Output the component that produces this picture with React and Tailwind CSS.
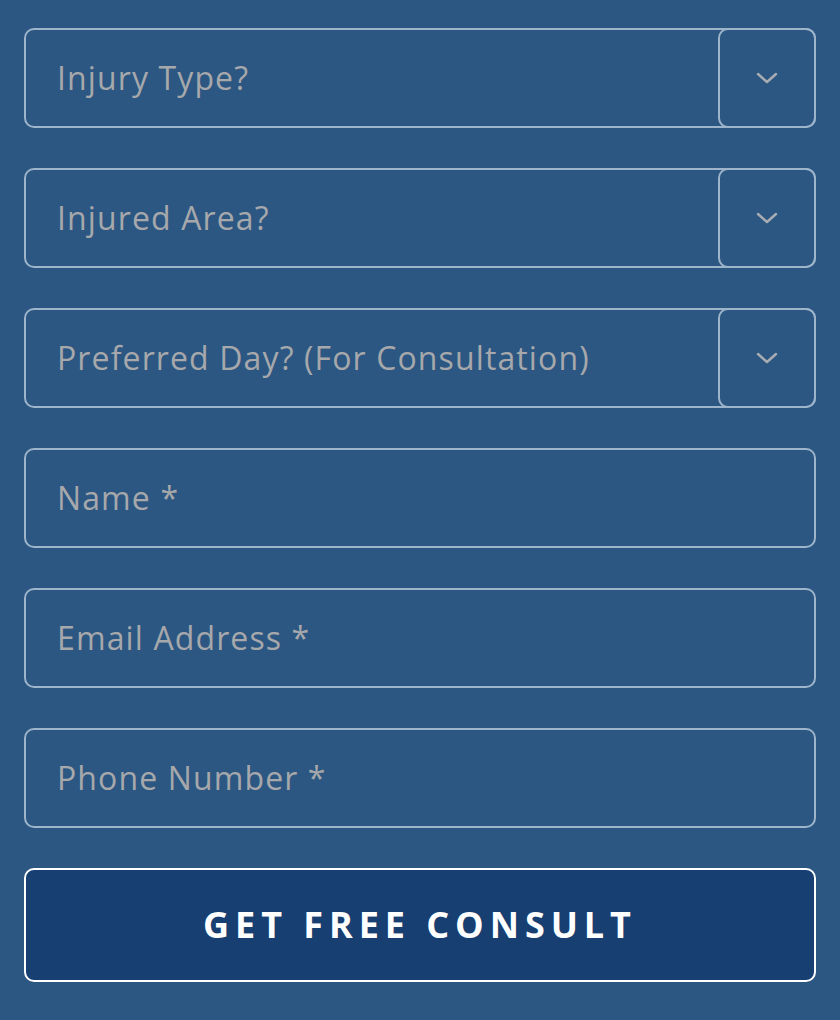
import React from "react";

function Chevron() {
  return (
    <svg width="22" height="14" viewBox="0 0 22 14" fill="none">
      <path d="M2 3 L11 11 L20 3" stroke="#a9adb3" strokeWidth="2.4" strokeLinecap="round" strokeLinejoin="round" />
    </svg>
  );
}

function Field({ label, select }) {
  return (
    <div className="relative h-[100px] w-full rounded-[10px] border-2 border-[#9db4ca] flex items-center pl-[31px]">
      <span className="text-[32px] text-[#a6a8ab] tracking-[0.035em]">{label}</span>
      {select && (
        <div className="absolute right-[-2px] top-[-2px] bottom-[-2px] w-[98px] rounded-[10px] border-2 border-[#9db4ca] flex items-center justify-center">
          <Chevron />
        </div>
      )}
    </div>
  );
}

export default function App() {
  return (
    <div className="w-[840px] h-[1020px] bg-[#2c5782] px-6 pt-[28px] flex flex-col gap-10 font-['Open_Sans','Liberation_Sans',sans-serif]">
      <Field label="Injury Type?" select />
      <Field label="Injured Area?" select />
      <Field label="Preferred Day? (For Consultation)" select />
      <Field label="Name *" />
      <Field label="Email Address *" />
      <Field label="Phone Number *" />
      <button className="h-[114px] w-full rounded-[10px] border-2 border-white bg-[#173f72] text-white text-[36px] font-bold tracking-[0.165em] flex items-center justify-center">
        GET FREE CONSULT
      </button>
    </div>
  );
}
